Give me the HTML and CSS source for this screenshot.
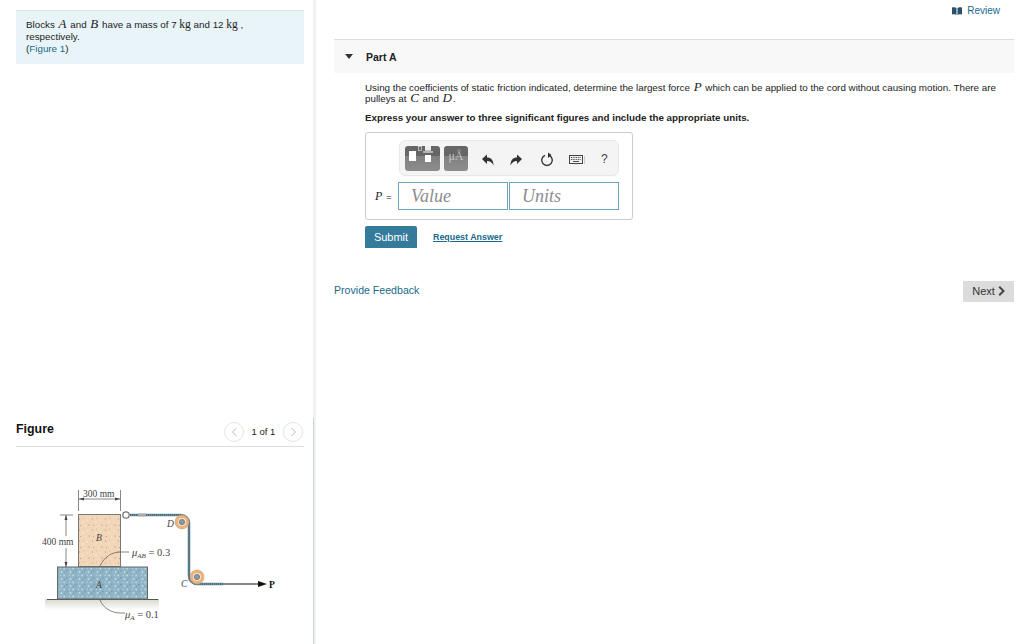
FILE: index.html
```html
<!doctype html>
<html lang="en">
<head>
  <meta charset="utf-8" />
  <meta name="viewport" content="width=device-width,initial-scale=1" />
  <title>Part A</title>
  <link rel="stylesheet" href="styles.css">
</head>
<body>

<div class="page">
  <div class="left">
    <div class="intro">
      Blocks <span class="m">A</span> and <span class="m">B</span> have a mass of 7 <span class="u">kg</span> and 12 <span class="u">kg</span> ,<br>
      respectively.<br>
      (<a class="link" href="#">Figure 1</a>)
    </div>

    <div class="fig-head">
      <h2>Figure</h2>
      <div class="pager">
        <span class="pg"><svg width="7" height="10" viewBox="0 0 7 10"><path d="M5.5 1 1.5 5l4 4" fill="none" stroke="#bbb"/></svg></span>
        <span class="pg-text">1 of 1</span>
        <span class="pg"><svg width="7" height="10" viewBox="0 0 7 10"><path d="M1.5 1l4 4-4 4" fill="none" stroke="#bbb"/></svg></span>
      </div>
    </div>

    <svg class="figure" width="250" height="150" viewBox="30 480 250 150">
      <defs>
        <pattern id="sand" width="13" height="11" patternUnits="userSpaceOnUse">
          <rect width="13" height="11" fill="#f2d6b8"/>
          <circle cx="1.500" cy="2" r=".7" fill="#c9a98a"/>
          <circle cx="5" cy="5" r=".8" fill="#fff3e4"/>
          <circle cx="5.500" cy="1" r=".4" fill="#b99a80"/>
          <circle cx="9.500" cy="3" r=".6" fill="#fff3e4"/>
          <circle cx="11" cy="8" r=".8" fill="#c9a98a"/>
          <circle cx="2.500" cy="8.500" r=".6" fill="#b99a80"/>
          <circle cx="7.500" cy="9" r=".5" fill="#fff3e4"/>
        </pattern>
        <pattern id="stone" width="9" height="7" patternUnits="userSpaceOnUse">
          <rect width="9" height="7" fill="#8fb4c5"/>
          <circle cx="1.200" cy="1.400" r=".9" fill="#c4dbe4"/>
          <circle cx="3.800" cy="3.600" r=".8" fill="#6e9bae"/>
          <circle cx="6.500" cy="1.200" r=".8" fill="#b5d0db"/>
          <circle cx="7.500" cy="5" r="1" fill="#c4dbe4"/>
          <circle cx="1.500" cy="5.500" r=".7" fill="#6e9bae"/>
        </pattern>
        <linearGradient id="shade" x1="0" y1="0" x2="0" y2="1">
          <stop offset="0" stop-color="#d8d8cc"/>
          <stop offset="1" stop-color="#fff"/>
        </linearGradient>
      </defs>

      <rect x="45" y="599" width="114" height="11" fill="url(#shade)"/>
      <path d="M47 599.500H158" stroke="#555"/>
      <rect x="78.500" y="514.500" width="42" height="52" fill="url(#sand)" stroke="#777"/>
      <rect x="57.500" y="567" width="90" height="32" fill="url(#stone)" stroke="#666"/>

      <g fill="none" stroke="#555" stroke-width=".7">
        <path d="M78.500 490v21M120.500 490v21M79 499h41"/>
        <path d="M60 515h13M66 515v21M66 548v19"/>
        <path d="M100 566c4-9 12-14 20-14h9"/>
        <path d="M100 600c3 8 12 13 20 13h5"/>
      </g>
      <path d="M79 499l5-1.500v3zM120 499l-5-1.500v3zM66 515l-1.500 5h3zM66 567l-1.500-5h3z" fill="#444"/>

      <path d="M130 515H181a8 8 0 0 1 8 8V576a8 8 0 0 0 8 8H223" fill="none" stroke="#6b8c9d" stroke-width="2.600"/>
      <path d="M130 515H181a8 8 0 0 1 8 8V576a8 8 0 0 0 8 8H223" fill="none" stroke="#2f4f60" stroke-width="1.200" stroke-dasharray="1 1"/>
      <rect x="138" y="513.500" width="8" height="3" fill="#aaa"/>
      <circle cx="126" cy="515" r="3.200" fill="#fff" stroke="#777" stroke-width="1.300"/>

      <circle cx="182" cy="522" r="7" fill="#e9b37e" stroke="#c99a6a" stroke-width=".6"/>
      <circle cx="182" cy="522" r="4" fill="#f5e3cf"/>
      <circle cx="182" cy="522" r="2.600" fill="#8b9aa3" stroke="#667" stroke-width=".7"/>
      <circle cx="197" cy="577" r="7" fill="#e9b37e" stroke="#c99a6a" stroke-width=".6"/>
      <circle cx="197" cy="577" r="4" fill="#f5e3cf"/>
      <circle cx="197" cy="577" r="2.600" fill="#8b9aa3" stroke="#667" stroke-width=".7"/>

      <path d="M223 584h36" stroke="#111" stroke-width="1.200"/>
      <path d="M267 584l-9-3v6z" fill="#111"/>

      <g class="fig-text">
        <text x="83" y="497">300 mm</text>
        <text x="42" y="545">400 mm</text>
        <text x="96" y="541" class="it">B</text>
        <text x="96" y="588" class="it">A</text>
        <text x="167" y="527" class="it">D</text>
        <text x="181" y="587" class="it">C</text>
        <text x="132" y="556" class="mu"><tspan class="it">μ</tspan><tspan class="it sub" dy="1.500">AB</tspan><tspan dy="-1.500"> = 0.3</tspan></text>
        <text x="125" y="618" class="mu"><tspan class="it">μ</tspan><tspan class="it sub" dy="1.500">A</tspan><tspan dy="-1.500"> = 0.1</tspan></text>
        <text x="269" y="588" class="bold">P</text>
      </g>
    </svg>
  </div>

  <div class="right">
    <div class="review">
      <svg width="10" height="8" viewBox="0 0 10 8"><path d="M0 .5C2 0 3.500 0 4.500 1V8C3.500 7 2 7 0 7.500zM10 .5C8 0 6.500 0 5.500 1V8C6.500 7 8 7 10 7.500z" fill="#28516b"/></svg>
      <a class="link" href="#">Review</a>
    </div>

    <div class="part-bar">
      <span class="caret"></span>
      <span class="part-title">Part A</span>
    </div>

    <div class="part-body">
      <p class="question">Using the coefficients of static friction indicated, determine the largest force <span class="m">P</span> which can be applied to the cord without causing motion. There are pulleys at <span class="m">C</span> and <span class="m">D</span>.</p>
      <p class="express">Express your answer to three significant figures and include the appropriate units.</p>

      <div class="answer">
        <div class="toolbar">
          <span class="tool tool-wide">
            <svg width="35" height="25" viewBox="0 0 35 25">
              <rect x="4" y="5" width="7" height="10" fill="#fff"/>
              <rect x="13.500" y=".5" width="3" height="4" fill="none" stroke="#ddd" stroke-width=".7"/>
              <rect x="20" y="0" width="6" height="4.700" fill="#eee"/>
              <rect x="18" y="5.500" width="10" height="1" fill="#fff"/>
              <rect x="20" y="9" width="6" height="7" fill="#fff"/>
            </svg>
          </span>
          <span class="tool tool-unit">μÅ</span>
          <svg class="ico ico-undo" width="14" height="14" viewBox="0 0 14 14"><path d="M1 6l5-4.500V4.500C10 4.500 12.500 7 12.500 12.500 11 9.500 9.500 8 6 8v3z" fill="#333"/></svg>
          <svg class="ico ico-redo" width="14" height="14" viewBox="0 0 14 14"><path d="M13 6L8 1.500V4.500C4 4.500 1.500 7 1.500 12.500 3 9.500 4.500 8 8 8v3z" fill="#333"/></svg>
          <svg class="ico ico-reset" width="14" height="15" viewBox="0 0 14 15"><path d="M9 3.300a5.300 5.300 0 1 1-4 0" fill="none" stroke="#333" stroke-width="1.400"/><path d="M8 .5v5.500l3.500-3z" fill="#333"/></svg>
          <svg class="ico ico-keys" width="14" height="9" viewBox="0 0 14 9"><rect x=".5" y=".5" width="13" height="8" fill="#eee" stroke="#444"/><path d="M2 2.500h10M2 4.500h10" stroke="#555" stroke-dasharray="1 .7"/><path d="M4 6.500h6" stroke="#555"/></svg>
          <span class="tool-sep"></span>
          <span class="help">?</span>
        </div>
        <div class="answer-row">
          <span class="var"><span class="m">P</span> =</span>
          <input class="field" type="text" placeholder="Value" />
          <input class="field" type="text" placeholder="Units" />
        </div>
      </div>

      <div class="actions">
        <button class="submit">Submit</button>
        <a class="request" href="#">Request Answer</a>
      </div>
    </div>

    <div class="foot">
      <a class="link feedback" href="#">Provide Feedback</a>
      <button class="next">Next <svg width="7" height="10" viewBox="0 0 7 10"><path d="M1.200 .8 5.500 5 1.200 9.200" fill="none" stroke="#444" stroke-width="2"/></svg></button>
    </div>
  </div>
</div>

</body>
</html>
```

FILE: styles.css
```css
html,body{margin:0;height:100%;background:#fff;}
body{font-family:"Liberation Sans",Arial,sans-serif;font-size:9.8px;color:#222;overflow:hidden;}
p{margin:0;}
.link{color:#1a6a8c;text-decoration:none;}
.m{display:inline-block;height:9px;padding:0 1px;font-family:"Liberation Serif",serif;font-style:italic;font-size:13px;line-height:9px;}
.u{display:inline-block;height:9px;font-family:"Liberation Serif",serif;font-size:11.5px;line-height:9px;}

.page{display:flex;height:644px;}
.left{box-sizing:border-box;width:316px;height:644px;padding:10px 12px 0 16px;flex:none;background:linear-gradient(#c8d0da,#c8d0da) 313px 418px/1px 226px no-repeat,linear-gradient(#eff1f5,#eff1f5) 313px 0/3px 100% no-repeat;}
.intro{box-sizing:border-box;height:54px;padding:8px 10px 6px;line-height:12px;background:#e8f4f7;border-top:1px solid #dfe5e7;}

.fig-head{box-sizing:border-box;display:flex;justify-content:space-between;align-items:center;height:34px;margin-top:349px;border-bottom:1px solid #ddd;}
.fig-head h2{margin:0 0 2px;font-size:12.4px;line-height:16px;color:#111;}
.pager{display:flex;align-items:center;margin:4px 1px 0 0;}
.pg{box-sizing:border-box;display:flex;align-items:center;justify-content:center;width:20px;height:20px;border:1px solid #e3e3e3;border-radius:50%;}
.pg-text{width:39px;text-align:center;font-size:9.500px;}
.figure{display:block;margin:33px 0 0 14px;}
.fig-text text{font-family:"Liberation Serif",serif;font-size:9.500px;fill:#444;}
.fig-text .it{font-style:italic;}
.fig-text .sub{font-size:7px;}
.fig-text .mu{font-size:10.500px;}
.fig-text .bold{font-weight:bold;fill:#111;}

.right{flex:1;min-width:0;padding:0 10px 0 18px;}
.review{display:flex;justify-content:flex-end;align-items:center;gap:5px;height:21px;padding-right:14px;font-size:10px;}
.part-bar{box-sizing:border-box;display:flex;align-items:center;height:34px;margin-top:18px;background:#f8f8f8;border-top:1px solid #ddd;}
.caret{width:0;height:0;margin-left:11px;border:4px solid transparent;border-top:5px solid #333;border-bottom:0;}
.part-title{margin-left:13px;font-size:10.5px;font-weight:bold;color:#222;}

.part-body{padding:9px 0 0 31px;}
.question{width:640px;line-height:11px;}
.express{margin-top:8px;font-weight:bold;line-height:12px;}

.answer{box-sizing:border-box;width:268px;height:88px;margin-top:8px;padding:7px 13px 0 33px;border:1px solid #ccc;border-radius:3px;}
.toolbar{box-sizing:border-box;display:flex;align-items:center;height:36px;padding-left:5px;background:#f4f4f4;border:1px solid #e8e8e8;border-radius:6px;}
.tool{display:block;height:25px;border-radius:3px;background:linear-gradient(#666 0,#666 38%,#808080 39%,#8d8d8d 100%);}
.tool-wide{width:35px;}
.tool-wide svg{display:block;}
.tool-unit{width:24px;margin-left:4px;text-align:center;color:#c4c4c4;font-family:"Liberation Serif",serif;font-size:12px;line-height:20px;}
.ico{flex:none;margin-top:3px;}
.ico-undo{margin-left:13px;}
.ico-redo{margin-left:14px;}
.ico-reset{margin-left:17px;}
.ico-keys{margin-left:15px;}
.tool-sep{width:1px;height:8px;margin:3px 0 0 1px;background:#ccc;}
.help{margin:2px 0 0 16px;font-size:12px;color:#444;}

.answer-row{display:flex;align-items:center;gap:1px;margin-top:6px;margin-left:-25px;}
.var{width:26px;font-size:9.8px;}
.var .m{font-size:12px;}
.field{box-sizing:border-box;width:110px;height:28px;margin:0;padding:0 12px;border:1px solid #6fa3bd;background:#fff;border-radius:0;font-family:"Liberation Serif",serif;font-style:italic;font-size:18px;outline:none;}
.field::placeholder{color:#8c8c8c;opacity:1;}

.actions{display:flex;align-items:center;margin-top:6px;}
.submit{width:52px;height:22px;padding:0;border:none;border-radius:2px 2px 0 0;background:#337a9b;color:#fff;font-family:inherit;font-size:11px;}
.request{margin-left:16px;color:#1a6a8c;font-size:8.9px;font-weight:bold;}

.foot{display:flex;justify-content:space-between;align-items:center;margin-top:33px;}
.feedback{margin-bottom:3px;font-size:10.6px;}
.next{display:flex;align-items:center;justify-content:center;gap:3px;width:51px;height:21px;padding:0 0 2px;border:none;background:#dcdcdc;color:#333;font-family:inherit;font-size:11px;}
```
